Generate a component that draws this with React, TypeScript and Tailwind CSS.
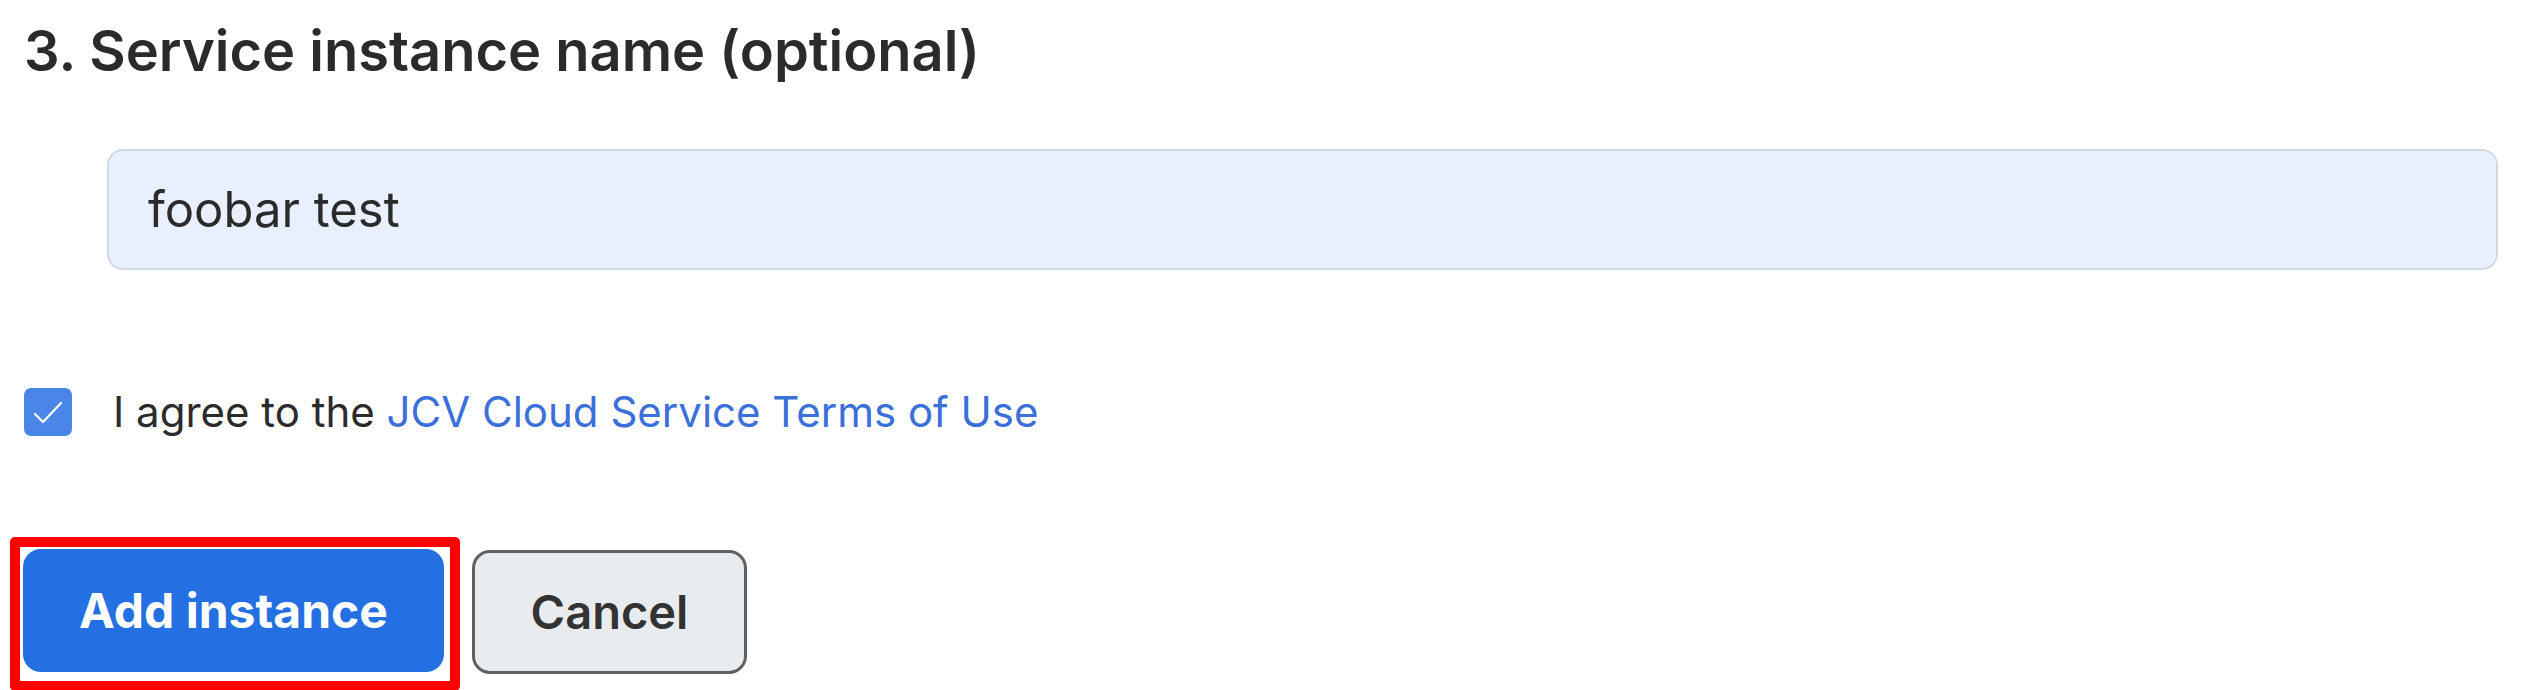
import { useState } from "react";

export default function App() {
	const [name, setName] = useState("foobar test");
	const [agreed, setAgreed] = useState(true);

	return (
		<div className="min-h-screen bg-white font-['Inter','Noto_Sans',sans-serif] text-[#2b2b2b]">
			<div className="pl-[24px] pr-[26px] pt-[20px]">
				<h2 className="text-[56px] leading-[62px] font-semibold">
					3. Service instance name (optional)
				</h2>

				<div className="mt-[67px] pl-[83px]">
					<input
						value={name}
						onChange={(e) => setName(e.target.value)}
						className="h-[121px] w-full rounded-[16px] border-2 border-[#d3d9e2] bg-[#e8f0fe] px-[39px] text-[49px] text-[#2b2b2b] outline-none"
					/>
				</div>

				<label className="mt-[118px] flex items-center gap-[41px]">
					<button
						type="button"
						onClick={() => setAgreed(!agreed)}
						className="relative h-[48px] w-[48px] shrink-0 rounded-[7px] bg-[#4a86e8]"
					>
						{agreed && (
							<svg className="absolute inset-0" width="48" height="48" viewBox="0 0 48 48" fill="none">
								<polyline
									points="11,26 19,34 37,15"
									stroke="white"
									strokeWidth="2.2"
									strokeLinecap="round"
									strokeLinejoin="round"
								/>
							</svg>
						)}
					</button>
					<span className="text-[42px] leading-none">
						I agree to the{" "}
						<a href="#" className="text-[#3b6fd9]">
							JCV Cloud Service Terms of Use
						</a>
					</span>
				</label>

				<div className="mt-[101px] flex items-start gap-[12px]">
					<div className="-ml-[14px] rounded-[5px] border-[10px] border-[#ff0000] pt-[2px] pr-[6px] pb-[9px] pl-[3px]">
						<button
							type="button"
							className="h-[123px] w-[421px] rounded-[18px] bg-[#2470e3] text-[48px] font-bold text-white"
						>
							Add instance
						</button>
					</div>
					<button
						type="button"
						className="mt-[13px] h-[124px] w-[275px] rounded-[18px] border-[3px] border-[#5f6163] bg-[#e9ecef] text-[47px] font-semibold text-[#333]"
					>
						Cancel
					</button>
				</div>
			</div>
		</div>
	);
}
